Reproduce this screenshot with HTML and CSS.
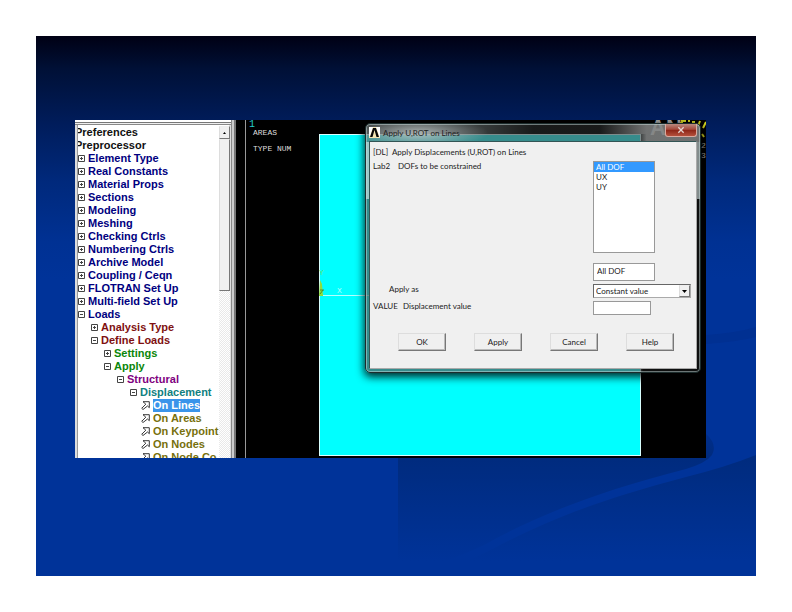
FILE: index.html
```html
<!DOCTYPE html>
<html lang="en">
<head>
<meta charset="utf-8">
<title>Apply U,ROT on Lines</title>
<link rel="stylesheet" href="styles.css">
</head>
<body>
<svg class="defs" aria-hidden="true">
  <symbol id="plus" viewBox="0 0 7 7"><path d="M.5.5h6v6h-6zM2 3.500h3M3.500 2v3" fill="none" stroke="#444"/></symbol>
  <symbol id="minus" viewBox="0 0 7 7"><path d="M.5.5h6v6h-6zM2 3.500h3" fill="none" stroke="#444"/></symbol>
  <symbol id="pick" viewBox="0 0 9 9"><path d="M2 .7h6.300v6L6.500 5 2 8.500.7 7.300 4.800 3.200z" fill="#fff" stroke="#222" stroke-width=".9"/></symbol>
</svg>
<main class="slide">
  <svg class="swoosh" viewBox="0 0 720 540" preserveAspectRatio="none" aria-hidden="true">
    <defs>
      <linearGradient id="deep" gradientUnits="userSpaceOnUse" x1="0" y1="395" x2="0" y2="525">
        <stop offset="0" stop-color="#002f8d"/><stop offset=".2" stop-color="#002b7e"/><stop offset="1" stop-color="#003399"/>
      </linearGradient>
    </defs>
    <path d="M670 299Q700 297 720 291V301Q700 306 670 308z" fill="#003092"/>
    <path d="M362 400H660L669 397Q682 408 676 419Q670 427 650 433C560 456 500 480 450 508Q400 532 362 539z" fill="url(#deep)"/>
    <path d="M720 419Q690 431 650 441C570 462 520 481 470 506Q430 528 390 540H720z" fill="url(#deep)"/>
  </svg>
  <div class="app">
    <aside class="menu">
      <nav class="tree" aria-label="Main menu">
        <ul>
          <li><a class="row root" href="#">Preferences</a></li>
          <li><a class="row root" href="#">Preprocessor</a></li>
          <li><a class="row" href="#"><svg><use href="#plus"/></svg>Element Type</a></li>
          <li><a class="row" href="#"><svg><use href="#plus"/></svg>Real Constants</a></li>
          <li><a class="row" href="#"><svg><use href="#plus"/></svg>Material Props</a></li>
          <li><a class="row" href="#"><svg><use href="#plus"/></svg>Sections</a></li>
          <li><a class="row" href="#"><svg><use href="#plus"/></svg>Modeling</a></li>
          <li><a class="row" href="#"><svg><use href="#plus"/></svg>Meshing</a></li>
          <li><a class="row" href="#"><svg><use href="#plus"/></svg>Checking Ctrls</a></li>
          <li><a class="row" href="#"><svg><use href="#plus"/></svg>Numbering Ctrls</a></li>
          <li><a class="row" href="#"><svg><use href="#plus"/></svg>Archive Model</a></li>
          <li><a class="row" href="#"><svg><use href="#plus"/></svg>Coupling / Ceqn</a></li>
          <li><a class="row" href="#"><svg><use href="#plus"/></svg>FLOTRAN Set Up</a></li>
          <li><a class="row" href="#"><svg><use href="#plus"/></svg>Multi-field Set Up</a></li>
          <li><a class="row" href="#"><svg><use href="#minus"/></svg>Loads</a>
            <ul class="maroon">
              <li><a class="row" href="#"><svg><use href="#plus"/></svg>Analysis Type</a></li>
              <li><a class="row" href="#"><svg><use href="#minus"/></svg>Define Loads</a>
                <ul class="green">
                  <li><a class="row" href="#"><svg><use href="#plus"/></svg>Settings</a></li>
                  <li><a class="row" href="#"><svg><use href="#minus"/></svg>Apply</a>
                    <ul class="purple">
                      <li><a class="row" href="#"><svg><use href="#minus"/></svg>Structural</a>
                        <ul class="teal">
                          <li><a class="row" href="#"><svg><use href="#minus"/></svg>Displacement</a>
                            <ul class="leaves">
                              <li><a class="row" href="#" aria-current="true"><svg><use href="#pick"/></svg><span class="current">On Lines</span></a></li>
                              <li><a class="row" href="#"><svg><use href="#pick"/></svg>On Areas</a></li>
                              <li><a class="row" href="#"><svg><use href="#pick"/></svg>On Keypoint</a></li>
                              <li><a class="row" href="#"><svg><use href="#pick"/></svg>On Nodes</a></li>
                              <li><a class="row" href="#"><svg><use href="#pick"/></svg>On Node Co</a></li>
                            </ul>
                          </li>
                        </ul>
                      </li>
                    </ul>
                  </li>
                </ul>
              </li>
            </ul>
          </li>
        </ul>
      </nav>
      <div class="scrollbar">
        <button class="scroll-up" type="button" aria-label="Scroll up"><svg viewBox="0 0 5 3"><path d="M1 3h3L2.500 1z"/></svg></button>
        <div class="thumb"></div>
      </div>
    </aside>
    <section class="viewport" aria-label="Graphics window">
      <svg class="scene" viewBox="0 0 460 338" preserveAspectRatio="xMinYMin meet">
        <rect x="73.500" y="14.500" width="321" height="321" fill="#0ff" stroke="#d8ffff"/>
        <path d="M74 175.500h60" stroke="#b4ffff"/>
        <path d="M73 176l1-16 2 4 1 12z" fill="#8fdc3c"/>
        <path d="M74 170h4M74 174l3-4" stroke="#4f8f2c"/>
        <g class="axis"><text x="73" y="155" fill="#5ce66e">Y</text><text x="91" y="173" fill="#a8ffff">X</text></g>
        <g class="logo"><text x="404" y="15" fill="#aaa">AN</text></g>
        <path d="M435 1h5m-6 2h3m5-2h2m2 1h3m-2 2h4m3-3l-2 5m8-4l-3 6m-1 6l2 3M444 4h2" stroke="#d6d822" stroke-width="2"/>
        <g class="stamp"><text x="455" y="28">2</text><text x="455" y="38">3</text></g>
      </svg>
      <div class="legend">
        <span class="window-number">1</span>
        <span>AREAS</span>
        <span>TYPE NUM</span>
      </div>
    </section>
    <form class="dialog" role="dialog" aria-labelledby="dialog-title">
      <header class="titlebar">
        <svg class="app-icon" viewBox="0 0 11 11" aria-hidden="true"><path d="M0 0h11v11H0z" fill="#f5e6b4"/><path d="M0 0h4L1 9H0zM7 0h4v11z" fill="#fff"/><path d="M1 10L4 1h3l3 9H7.500L5.500 3 3.500 10z" fill="#080808"/></svg>
        <h1 id="dialog-title">Apply U,ROT on Lines</h1>
        <button class="close" type="button" aria-label="Close"><svg viewBox="0 0 6 6"><path d="M1 1l4 4M5 1L1 5" stroke="#e4d4d0" stroke-width="1"/></svg></button>
      </header>
      <div class="content">
        <p class="command">[DL]&nbsp; Apply Displacements (U,ROT) on Lines</p>
        <div class="fields">
          <label for="dofs"><span class="key">Lab2</span>DOFs to be constrained</label>
          <select id="dofs" class="listbox" multiple size="8">
            <option selected>All DOF</option><option>UX</option><option>UY</option>
          </select>
          <input class="chosen" type="text" value="All DOF" aria-label="Selected DOFs">
          <label class="indented" for="apply-as">Apply as</label>
          <div class="combo">
            <select id="apply-as"><option>Constant value</option></select>
            <span class="arrow"><svg viewBox="0 0 5 3"><path d="M0 0h5L2.500 3z"/></svg></span>
          </div>
          <label for="value"><span class="key wide">VALUE</span>Displacement value</label>
          <input id="value" class="value" type="text">
        </div>
        <div class="actions">
          <button type="button">OK</button>
          <button type="button">Apply</button>
          <button type="button">Cancel</button>
          <button type="button">Help</button>
        </div>
      </div>
    </form>
  </div>
</main>
</body>
</html>
```
FILE: styles.css
```css
* { box-sizing: border-box; }

body {
  margin: 0;
  padding: 36px;
  background: #fff;
  font-family: "Liberation Sans", Arial, sans-serif;
}

.defs { position: absolute; width: 0; height: 0; }

.slide {
  position: relative;
  display: grid;
  height: calc(100vh - 72px);
  padding: 84px 50px 118px 39px;
  background: linear-gradient(#000014 0, #001036 6%, #001c5a 16%, #00297c 27%, #003193 38%, #003399 45%);
}

.swoosh { position: absolute; inset: 0; width: 100%; height: 100%; }

.app {
  position: relative;
  display: flex;
  min-height: 0;
  overflow: hidden;
  background: #000;
}

/* Menu tree */
.menu {
  display: flex;
  flex: none;
  width: 161px;
  padding: 6px 6px 0 3px;
  overflow: hidden;
  background:
    linear-gradient(#fff 0 2px, #777 2px 3px, #eee 3px 4px, #888 4px 5px, transparent 5px) 0 0 / 156px 100% no-repeat,
    linear-gradient(to right, #ddd 0 2px, #999 2px 3px, #fff 3px 154px, #ddd 154px 156px, #888 156px 157px, #ccc 157px 159px, #777 159px);
}

.tree {
  flex: 1;
  min-width: 0;
  overflow: hidden;
  font-size: 11px;
  font-weight: bold;
  line-height: 13px;
  white-space: nowrap;
  color: #000080;
}

.tree ul { margin: 0; padding: 0; list-style: none; }
.tree ul ul { padding-left: 13px; }
.tree ul .leaves { padding-left: 11px; color: #77700c; }

.row {
  display: flex;
  align-items: center;
  gap: 3px;
  color: inherit;
  text-decoration: none;
}
.row svg { flex: none; width: 7px; height: 7px; }
.leaves .row svg { width: 9px; height: 9px; }
.root { margin-left: -3px; color: #111; }
.maroon { color: #801010; }
.green { color: #0a860a; }
.purple { color: #800080; }
.teal { color: #108080; }
.current { background: #3a94ea; color: #fff; }

.scrollbar {
  flex: none;
  width: 11px;
  display: flex;
  flex-direction: column;
  background: repeating-conic-gradient(#fff 0 25%, #e9e9e9 0 50%) 0 0 / 2px 2px;
}
.scroll-up, .thumb {
  border: 1px solid;
  border-color: #eee #777 #777 #ddd;
  background: #f0f0f0;
}
.scroll-up { display: grid; place-items: center; height: 13px; padding: 0; }
.scroll-up svg { width: 5px; height: 3px; }
.thumb { height: 152px; }

/* Graphics window */
.viewport {
  position: relative;
  flex: 1;
  min-width: 0;
  margin-left: 9px;
  border-left: 1px solid #999;
  overflow: hidden;
}
.scene { position: absolute; top: 0; left: 0; width: 460px; height: 338px; }
.scene text { font-family: "Liberation Mono", monospace; font-size: 8px; }
.scene .logo text { font-family: "Liberation Sans", sans-serif; font-size: 22px; font-weight: bold; }
.stamp { fill: #aaa; }
.legend {
  position: relative;
  display: flex;
  flex-direction: column;
  padding: 1px 7px;
  font-family: "Liberation Mono", monospace;
  font-size: 8px;
  line-height: 8px;
  color: #ddd;
}
.legend span + span { margin-bottom: 8px; }
.window-number { margin-left: -4px; font-size: 10px; color: #2cc; }

/* Dialog */
.dialog {
  position: absolute;
  top: 3px;
  right: 5px;
  width: 336px;
  padding: 0 3px 3px;
  border: 1px solid #1c2c2c;
  border-radius: 5px;
  font-family: Lato, sans-serif;
  font-size: 8px;
  line-height: 10px;
  color: #222;
  background:
    linear-gradient(to right, transparent 82%, rgba(0, 0, 0, .75) 83%) 0 75px no-repeat,
    linear-gradient(to right, rgba(225, 240, 240, .6), rgba(225, 240, 240, .45)) 0 18px / 100% 57px no-repeat,
    radial-gradient(ellipse 70px 16px at 52px 9px, rgba(190, 200, 200, .85), transparent),
    linear-gradient(to right, transparent 35%, rgba(0, 0, 0, .55) 50% 70%, rgba(150, 150, 150, .6) 84%) 0 0 / 100% 10px no-repeat,
    linear-gradient(to right, transparent 82%, rgba(150, 150, 150, .6) 84%) 0 10px / 100% 8px no-repeat,
    rgba(80, 85, 85, .68);
  box-shadow: inset 0 0 0 1px rgba(200, 220, 220, .5), 0 3px 8px 1px rgba(0, 0, 0, .85);
}
.titlebar { display: flex; align-items: center; height: 17px; }
.app-icon { width: 11px; height: 11px; }
h1 { flex: 1; margin: 0 0 0 3px; font-size: 8px; font-weight: normal; }
.close {
  display: grid;
  place-items: center;
  align-self: flex-start;
  width: 32px;
  height: 13px;
  padding: 0;
  border: 1px solid #d9aaa0;
  border-top: 0;
  border-radius: 0 0 3px 3px;
  background: linear-gradient(#b98a80, #a5493b 45%, #8c2416 50%, #b5503c);
}
.close svg { width: 8px; height: 8px; }

.content {
  padding: 5px 5px 17px 3px;
  border: 1px solid;
  border-color: #355 #aaa #aaa #355;
  background: #f0f0f0;
}
.command { margin: 0 0 4px; }
.fields {
  display: grid;
  grid-template-columns: 1fr 98px;
  grid-template-rows: 92px 25px 14px 14px;
  row-gap: 3px;
}
.key { display: inline-block; width: 25px; }
.wide { width: 30px; }
.indented { padding-left: 16px; }

input, select, .actions button {
  margin: 0;
  font: inherit;
  color: inherit;
}
.listbox, .chosen, .value {
  width: 62px;
  border: 1px solid #999;
  border-radius: 0;
  background: #fff;
  outline: 0;
}
.listbox { height: 92px; padding: 0; overflow: hidden; }
.listbox option { min-height: 10px; padding: 0 2px; line-height: 10px; }
.listbox option:checked { background: #39f linear-gradient(#39f, #39f); -webkit-text-fill-color: #fff; }
.fields .chosen { grid-column: 2; margin-top: 7px; height: 18px; padding: 0 3px 3px; }
.fields .value { width: 58px; padding: 0 3px; }
.combo {
  display: flex;
  border: 1px solid;
  border-color: #666 #aaa #aaa #666;
  background: #fff;
}
.combo select {
  flex: 1;
  min-width: 0;
  padding: 0 2px;
  border: 0;
  appearance: none;
  background: none;
}
.arrow {
  display: grid;
  place-items: center;
  width: 11px;
  border: 1px solid;
  border-color: #eee #777 #777 #ddd;
  background: #f0f0f0;
}
.arrow svg { width: 5px; height: 3px; }

.actions { display: flex; justify-content: space-between; margin-top: 18px; padding: 0 17px 0 25px; }
.actions button {
  width: 48px;
  height: 18px;
  padding: 0;
  border: 1px solid;
  border-color: #ddd #777 #777 #ddd;
  background: #f0f0f0;
  box-shadow: inset -1px -1px #bbb;
}
```
